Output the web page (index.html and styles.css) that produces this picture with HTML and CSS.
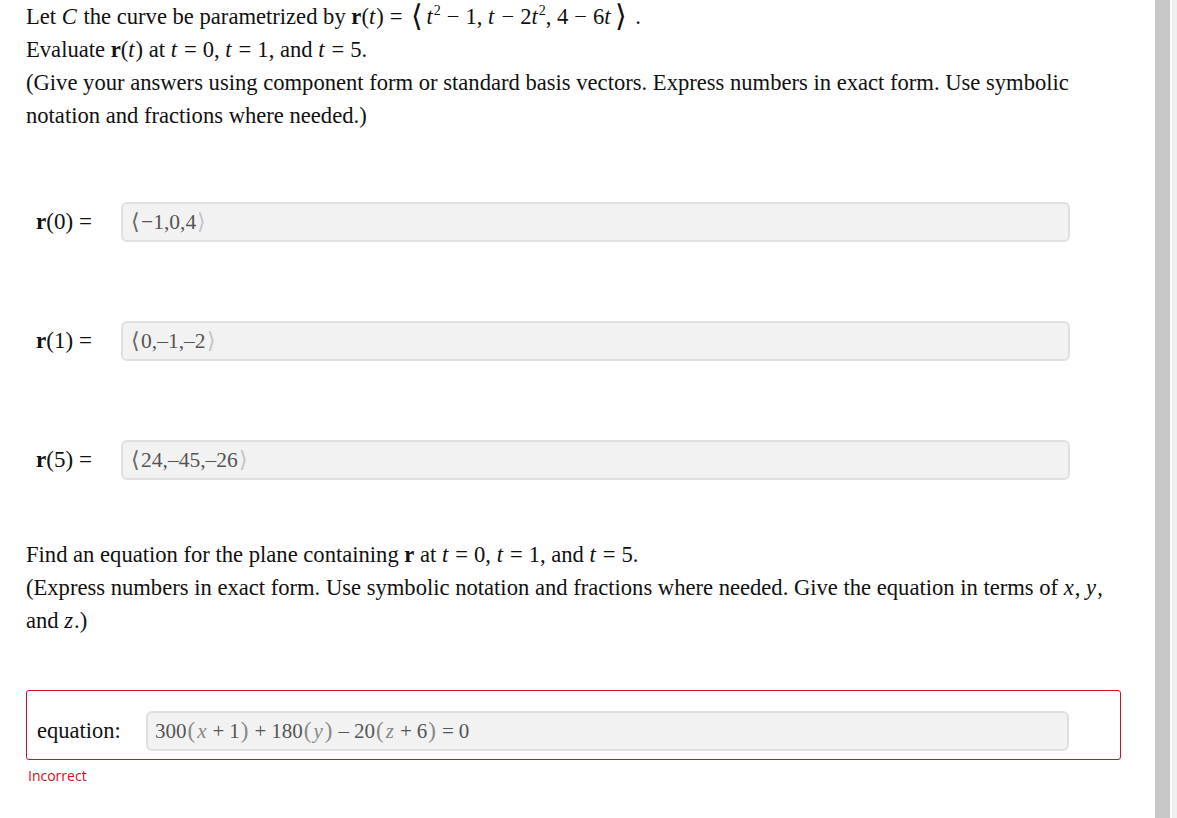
FILE: index.html
```html
<!DOCTYPE html>
<html lang="en">
<head>
  <meta charset="UTF-8" />
  <title>Curve and plane</title>
  <link rel="stylesheet" href="styles.css">
</head>
<body>
  <div class="page">
    <div class="content">
      <div class="prompt">
        <p>Let <i>C</i> the curve be parametrized by <b>r</b>(<i>t</i>)<span class="op">=</span><span class="big">⟨</span><i>t</i><sup>2</sup><span class="op">−</span>1, <i>t</i><span class="op">−</span>2<i>t</i><sup>2</sup>, 4<span class="op">−</span>6<i>t</i><span class="big">⟩</span> .</p>
        <p>Evaluate <b>r</b>(<i>t</i>) at <i>t</i><span class="op">=</span>0, <i>t</i><span class="op">=</span>1, and <i>t</i><span class="op">=</span>5.</p>
        <p>(Give your answers using component form or standard basis vectors. Express numbers in exact form. Use symbolic notation and fractions where needed.)</p>
      </div>

      <div class="row first">
        <span class="label"><b>r</b>(0)<span class="op">=</span></span>
        <div class="answer"><span class="br">⟨</span>−1,0,4<span class="br light">⟩</span></div>
      </div>
      <div class="row">
        <span class="label"><b>r</b>(1)<span class="op">=</span></span>
        <div class="answer"><span class="br">⟨</span>0,–1,–2<span class="br light">⟩</span></div>
      </div>
      <div class="row">
        <span class="label"><b>r</b>(5)<span class="op">=</span></span>
        <div class="answer"><span class="br">⟨</span>24,–45,–26<span class="br light">⟩</span></div>
      </div>

      <div class="prompt second">
        <p>Find an equation for the plane containing <b>r</b> at <i>t</i><span class="op">=</span>0, <i>t</i><span class="op">=</span>1, and <i>t</i><span class="op">=</span>5.</p>
        <p>(Express numbers in exact form. Use symbolic notation and fractions where needed. Give the equation in terms of <i>x</i>, <i>y</i>, and <i>z</i>.)</p>
      </div>

      <div class="wrong">
        <div class="row eq">
          <span class="label">equation:</span>
          <div class="answer">300<span class="par">(</span><i>x</i><span class="op">+</span>1<span class="par">)</span><span class="op">+</span>180<span class="par">(</span><i>y</i><span class="par">)</span><span class="op">–</span>20<span class="par">(</span><i>z</i><span class="op">+</span>6<span class="par">)</span><span class="op">=</span>0</div>
        </div>
      </div>
      <div class="status">Incorrect</div>
    </div>
    <div class="scrollbar"><div class="thumb"></div></div>
  </div>
</body>
</html>
```

FILE: styles.css
```css
html, body {
  margin: 0;
  height: 100%;
  overflow: hidden;
  background: #fff;
}

body {
  font-family: 'Liberation Serif', 'Times New Roman', serif;
  color: #111;
}

.page {
  display: flex;
  height: 100%;
}

.content {
  width: 1095px;
  padding: 0 34px 0 26px;
}

.prompt p {
  margin: 0;
  font-size: 22.6px;
  line-height: 33px;
}

.prompt i {
  padding-right: 1px;
}

.prompt sup {
  font-size: 14px;
  line-height: 0;
}

.op {
  margin: 0 6px;
}

.big {
  display: inline-block;
  font-size: 30px;
  line-height: 0;
  vertical-align: -2px;
  margin: 0 3px;
}

.second {
  margin-top: 58px;
}

.row {
  display: flex;
  align-items: center;
  padding: 0 51px 0 10px;
  margin-top: 79px;
}

.row.first {
  margin-top: 70px;
}

.label {
  width: 85px;
  flex: none;
  font-size: 23px;
}

.answer {
  flex: 1;
  height: 36px;
  line-height: 36px;
  border: 2px solid #e0e0e0;
  border-radius: 6px;
  background: #f2f2f2;
  padding: 0 8px;
  font-size: 21.5px;
  color: #555;
  white-space: nowrap;
}

.br {
  color: #666;
  margin-right: 1px;
}

.br.light {
  color: #c4c4c4;
  margin-left: 1px;
}

.wrong {
  margin-top: 53px;
  border: 1px solid #d50d20;
  border-radius: 3px;
  height: 68px;
}

.row.eq {
  margin-top: 20px;
  padding-right: 51px;
}

.row.eq .label {
  width: 109px;
  font-size: 22.5px;
}

.row.eq .answer {
  font-size: 21px;
  padding: 0 7px;
}

.row.eq .op {
  margin: 0 5px;
}

.row.eq i {
  color: #888;
  margin: 0 1px;
}

.par {
  color: #888;
  font-size: 23px;
  margin: 0 1px;
}

.status {
  margin-top: 6px;
  margin-left: 2px;
  font-family: 'Open Sans', 'Noto Sans', sans-serif;
  font-size: 14px;
  color: #d50d20;
}

.scrollbar {
  width: 22px;
  flex: none;
  background: #efefef;
  display: flex;
}

.thumb {
  width: 17px;
  background: #c8c8c8;
  margin-right: 5px;
  border-right: 2px solid #fff;
}
```
